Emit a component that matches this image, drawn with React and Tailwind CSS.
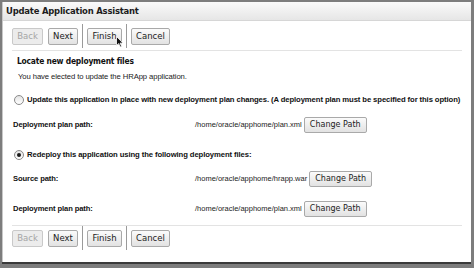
import { useState } from "react";

const btn =
  "flex items-center justify-center whitespace-nowrap rounded-[2px] border border-[#a9a9a9] bg-gradient-to-b from-[#fbfbfb] to-[#e2e2e2] leading-none text-[#222] font-['DejaVu_Sans',sans-serif]";

function NavButtons({ showCursor }) {
  return (
    <div className="flex h-[24px] items-center pl-[9px]">
      <button
        type="button"
        disabled
        className="flex h-[17px] w-[31px] items-center justify-center rounded-[2px] border border-[#c9c9c9] bg-[#ececec] text-[8.5px] leading-none text-[#a5a5a5] font-['DejaVu_Sans',sans-serif]"
      >
        Back
      </button>
      <button type="button" className={`${btn} ml-[5px] h-[17px] w-[30px] text-[8.5px]`}>
        Next
      </button>
      <div className="mx-[4px] h-[24px] w-px bg-[#9a9a9a]" />
      <div className="relative">
        <button
          type="button"
          className={`${btn} h-[17px] w-[35px] text-[8.5px] ${
            showCursor ? "border-[#8592a8] from-[#f2f5fa] to-[#c7d2e3]" : ""
          }`}
        >
          Finish
        </button>
        {showCursor && (
          <svg
            className="absolute left-[29px] top-[8px]"
            width="8"
            height="12"
            viewBox="0 0 8 12"
          >
            <path
              d="M0.5 0.5 L0.5 9.5 L2.7 7.6 L4.2 11 L5.6 10.4 L4.1 7.1 L7 7.1 Z"
              fill="#111"
              stroke="#fff"
              strokeWidth="0.8"
            />
          </svg>
        )}
      </div>
      <div className="mx-[4px] h-[24px] w-px bg-[#9a9a9a]" />
      <button type="button" className={`${btn} h-[17px] w-[39px] text-[8.5px]`}>
        Cancel
      </button>
    </div>
  );
}

function Radio({ checked, onClick }) {
  return (
    <span
      onClick={onClick}
      className="grid h-[10px] w-[10px] shrink-0 place-items-center rounded-full border border-[#8a8a8a] bg-gradient-to-b from-[#e4e4e4] to-[#ffffff]"
    >
      {checked && <span className="h-[4px] w-[4px] rounded-full bg-[#1a1a1a]" />}
    </span>
  );
}

function PathRow({ label, path, className = "" }) {
  return (
    <div className={`flex h-[16px] items-center pl-[10px] ${className}`}>
      <div className="w-[182px] text-[7.6px] font-bold leading-[10px] tracking-[-0.1px] text-[#111]">
        {label}
      </div>
      <span className="whitespace-nowrap text-[7.5px] leading-[10px] text-[#222]">{path}</span>
      <button type="button" className={`${btn} ml-[2px] h-[16px] w-[63px] text-[8px]`}>
        Change Path
      </button>
    </div>
  );
}

export default function App() {
  const [mode, setMode] = useState("redeploy");

  return (
    <div className="h-[268px] w-[474px] overflow-hidden bg-[#7d7d7d] pt-[2px] pl-[2px] pr-[3px] font-['Liberation_Sans',sans-serif]">
      <div className="h-[260px] border-l border-[#c8c8c8] bg-white">
        <div className="flex h-[19px] items-center border-b border-[#d6d6d6] bg-gradient-to-b from-[#fafafa] to-[#e6e6e6] pl-[3px] text-[9.4px] font-bold tracking-[-0.2px] text-[#1c1c1c] font-['DejaVu_Sans_Condensed','DejaVu_Sans',sans-serif]">
          Update Application Assistant
        </div>

        <div className="pt-[3px]">
          <NavButtons showCursor />
        </div>
        <div className="mx-[9px] mt-[2px] h-px bg-[#e3e3e3]" />

        <div className="pl-[14px] pt-[5px] text-[8.4px] font-bold leading-[10px] tracking-[-0.2px] text-[#111] font-['DejaVu_Sans_Condensed','DejaVu_Sans',sans-serif]">
          Locate new deployment files
        </div>
        <div className="pl-[15px] pt-[6px] text-[7.7px] leading-[10px] tracking-[-0.1px] text-[#222]">
          You have elected to update the HRApp application.
        </div>

        <div className="mt-[13px] flex h-[10px] items-center gap-[3px] pl-[11px]">
          <Radio checked={mode === "update"} onClick={() => setMode("update")} />
          <span className="whitespace-nowrap text-[7.7px] font-bold leading-[10px] tracking-[-0.1px] text-[#111]">
            Update this application in place with new deployment plan changes. (A deployment plan
            must be specified for this option)
          </span>
        </div>

        <PathRow
          className="mt-[12px]"
          label="Deployment plan path:"
          path="/home/oracle/apphome/plan.xml"
        />

        <div className="mt-[17px] flex h-[10px] items-center gap-[3px] pl-[11px]">
          <Radio checked={mode === "redeploy"} onClick={() => setMode("redeploy")} />
          <span className="whitespace-nowrap text-[7.7px] font-bold leading-[10px] tracking-[-0.1px] text-[#111]">
            Redeploy this application using the following deployment files:
          </span>
        </div>

        <PathRow className="mt-[11px]" label="Source path:" path="/home/oracle/apphome/hrapp.war" />
        <PathRow
          className="mt-[14px]"
          label="Deployment plan path:"
          path="/home/oracle/apphome/plan.xml"
        />

        <div className="mx-[9px] mt-[8px] h-px bg-[#e3e3e3]" />
        <NavButtons />
      </div>
      <div className="h-[2px] bg-[#3a3a3a]" />
    </div>
  );
}
